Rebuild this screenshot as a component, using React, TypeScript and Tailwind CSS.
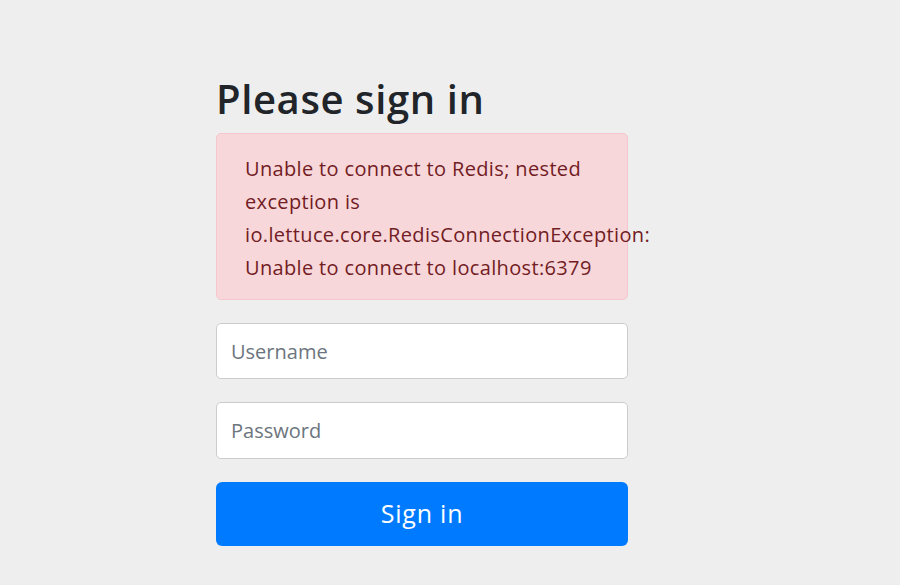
export default function App() {
  return (
    <div
      className="min-h-[585px] w-full bg-[#eeeeee] pt-[75px]"
      style={{ fontFamily: '"Open Sans", "Noto Sans", sans-serif' }}
    >
      <form className="ml-[216px] flex w-[412px] flex-col">
        <h2 className="mb-[10px] text-[40px] font-semibold leading-[48px] tracking-[0.6px] text-[#212529]">
          Please sign in
        </h2>
        <div className="rounded-[5px] border border-[#f5c6cb] bg-[#f8d7da] pt-[18px] pb-[15px] pl-[28px] pr-[28px] text-[20px] leading-[33px] tracking-[0.35px] text-[#721c24]">
          Unable to connect to Redis; nested exception is
          io.lettuce.core.RedisConnectionException: Unable to connect to
          localhost:6379
        </div>
        <input
          type="text"
          placeholder="Username"
          className="mt-[23px] h-[56px] w-full rounded-[5px] border border-[#cccccc] bg-white px-[14px] text-[20px] text-[#495057] outline-none placeholder:text-[#6c757d]"
        />
        <input
          type="password"
          placeholder="Password"
          className="mt-[23px] h-[57px] w-full rounded-[5px] border border-[#cccccc] bg-white px-[14px] text-[20px] text-[#495057] outline-none placeholder:text-[#6c757d]"
        />
        <button
          type="button"
          className="mt-[23px] h-[64px] w-full rounded-[6px] bg-[#007bff] text-[25px] tracking-[0.8px] text-white"
        >
          Sign in
        </button>
      </form>
    </div>
  );
}
